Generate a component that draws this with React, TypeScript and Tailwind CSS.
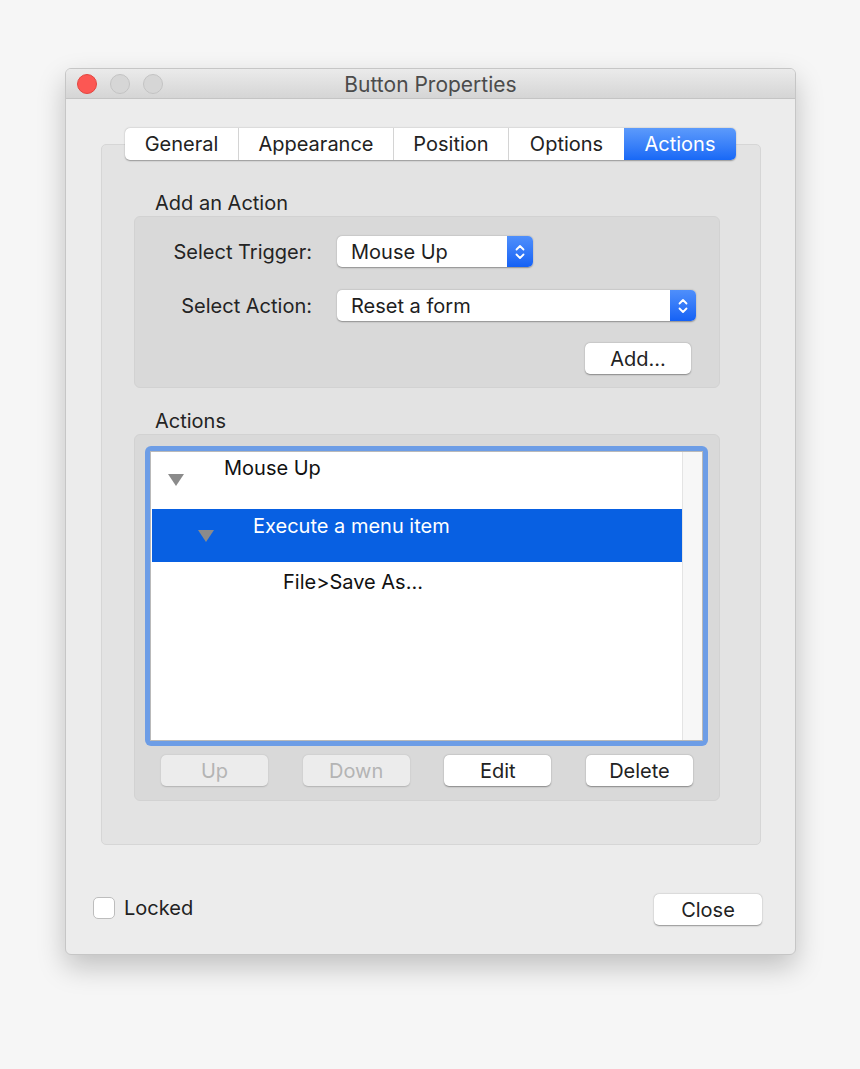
import React from "react";

const font = { fontFamily: 'Inter, "Noto Sans", Roboto, sans-serif' };

function Stepper({ className = "" }: { className?: string }) {
  return (
    <div
      className={`flex w-[26px] items-center justify-center self-stretch rounded-r-[5px] bg-gradient-to-b from-[#4f8ffb] to-[#1461f5] ${className}`}
    >
      <svg width="12" height="20" viewBox="0 0 12 20" fill="none">
        <path d="M2.5 7.5 L6 4 L9.5 7.5" stroke="white" strokeWidth="1.8" strokeLinecap="round" strokeLinejoin="round" />
        <path d="M2.5 12.5 L6 16 L9.5 12.5" stroke="white" strokeWidth="1.8" strokeLinecap="round" strokeLinejoin="round" />
      </svg>
    </div>
  );
}

function Popup({ label, width }: { label: string; width: string }) {
  return (
    <div
      className={`flex h-[31px] ${width} items-stretch rounded-[5px] bg-white shadow-[0_0.5px_1.5px_rgba(0,0,0,0.35)]`}
    >
      <div className="flex flex-1 items-center pl-[14px] text-[20px] text-[#1e1e1e]">{label}</div>
      <Stepper />
    </div>
  );
}

function Btn({ label, disabled = false, w = "w-[107px]" }: { label: string; disabled?: boolean; w?: string }) {
  return (
    <div
      className={`flex h-[31px] ${w} items-center justify-center rounded-[5px] text-[20px] ${
        disabled
          ? "bg-[#ececec] text-[#b4b4b4] shadow-[0_0.5px_1.5px_rgba(0,0,0,0.18)]"
          : "bg-white text-[#222] shadow-[0_0.5px_1.5px_rgba(0,0,0,0.38)]"
      }`}
    >
      {label}
    </div>
  );
}

function Triangle() {
  return (
    <svg width="18" height="14" viewBox="0 0 18 14">
      <path d="M1 1 H17 L9 13 Z" fill="#8b8b8b" />
    </svg>
  );
}

export default function App() {
  const tabs = ["General", "Appearance", "Position", "Options", "Actions"];
  const tabW = ["w-[114px]", "w-[155px]", "w-[115px]", "w-[115px]", "w-[112px]"];
  return (
    <div className="h-[1069px] w-[860px] bg-[#f6f6f6] pl-[65px] pt-[68px]" style={font}>
      <div className="flex h-[887px] w-[731px] flex-col overflow-hidden rounded-[6px] border border-[#c6c6c6] bg-[#ececec] shadow-[0_12px_28px_rgba(0,0,0,0.22)]">
        {/* Title bar */}
        <div className="grid h-[30px] shrink-0 grid-cols-[1fr_auto_1fr] items-center border-b border-[#c4c4c4] bg-gradient-to-b from-[#ebebeb] to-[#d5d5d5]">
          <div className="flex items-center gap-[13px] pl-[11px]">
            <div className="h-[20px] w-[20px] rounded-full border border-[#e2463f] bg-[#fc5753]" />
            <div className="h-[20px] w-[20px] rounded-full border border-[#c3c3c3] bg-[#d6d6d6]" />
            <div className="h-[20px] w-[20px] rounded-full border border-[#c3c3c3] bg-[#d6d6d6]" />
          </div>
          <div className="pt-[2px] text-[21px] leading-[26px] text-[#4b4b4b]">Button Properties</div>
          <div />
        </div>

        {/* Body */}
        <div className="flex flex-1 flex-col px-[35px] pt-[29px]">
          {/* Tabs */}
          <div className="relative z-10 mx-auto -mb-[16px] flex h-[32px] overflow-hidden rounded-[5px] bg-white shadow-[0_0.5px_1.5px_rgba(0,0,0,0.35)]">
            {tabs.map((t, i) => (
              <div
                key={t}
                className={`flex ${tabW[i]} items-center justify-center text-[20px] ${
                  t === "Actions"
                    ? "bg-gradient-to-b from-[#5c9afb] to-[#1768f6] text-white"
                    : "text-[#222] " + (i < 3 ? "border-r border-[#d4d4d4]" : "")
                }`}
              >
                {t}
              </div>
            ))}
          </div>

          {/* Tab panel */}
          <div className="h-[701px] w-[660px] rounded-[5px] border border-[#d6d6d6] bg-[#e3e3e3] px-[32px] pt-[46px]">
            <div className="pl-[21px] text-[20px] leading-[24px] text-[#242424]">Add an Action</div>
            <div className="mt-[1px] h-[172px] w-[586px] rounded-[6px] border border-[#d2d2d2] bg-[#d9d9d9] pt-[19px] pr-[27px]">
              <div className="grid grid-cols-[177px_1fr] items-center gap-x-[25px] gap-y-[23px]">
                <div className="text-right text-[20px] text-[#242424]">Select Trigger:</div>
                <Popup label="Mouse Up" width="w-[196px]" />
                <div className="text-right text-[20px] text-[#242424]">Select Action:</div>
                <Popup label="Reset a form" width="w-[359px]" />
              </div>
              <div className="mt-[22px] flex justify-end pr-[1px]">
                <Btn label="Add..." w="w-[106px]" />
              </div>
            </div>

            <div className="mt-[21px] pl-[21px] text-[20px] leading-[24px] text-[#242424]">Actions</div>
            <div className="mt-[1px] h-[367px] w-[586px] rounded-[6px] border border-[#d2d2d2] bg-[#d9d9d9] px-[10px] pt-[11px]">
              <div className="h-[300px] w-[563px] rounded-[6px] bg-[#6d9de6] p-[5px]">
                <div className="flex h-full border border-[#b9b9b9] bg-white pl-[1px]">
                  <div className="flex-1">
                    <div className="relative h-[57px]">
                      <div className="absolute left-[15px] top-[21px]"><Triangle /></div>
                      <div className="pl-[72px] pt-[1px] text-[20px] text-[#111]">Mouse Up</div>
                    </div>
                    <div className="relative h-[53px] bg-[#0860e2]">
                      <div className="absolute left-[45px] top-[20px]"><Triangle /></div>
                      <div className="pl-[101px] pt-[2px] text-[20px] text-white">Execute a menu item</div>
                    </div>
                    <div className="pl-[131px] pt-[5px] text-[20px] text-[#111]">File&gt;Save As...</div>
                  </div>
                  <div className="w-[20px] border-l border-[#e4e4e4] bg-[#f7f7f7]" />
                </div>
              </div>
              <div className="mt-[9px] flex justify-between px-[16px]">
                <Btn label="Up" disabled />
                <Btn label="Down" disabled />
                <Btn label="Edit" />
                <Btn label="Delete" />
              </div>
            </div>
          </div>

          {/* Footer */}
          <div className="mt-[45px] flex items-center justify-between">
            <div className="-ml-[8px] flex items-center gap-[9px]">
              <div className="h-[22px] w-[22px] rounded-[5px] border border-[#bdbdbd] bg-white" />
              <div className="text-[20px] text-[#222]">Locked</div>
            </div>
            <div className="-mr-[2px] mt-[4px]">
              <Btn label="Close" w="w-[108px]" />
            </div>
          </div>
        </div>
      </div>
    </div>
  );
}
